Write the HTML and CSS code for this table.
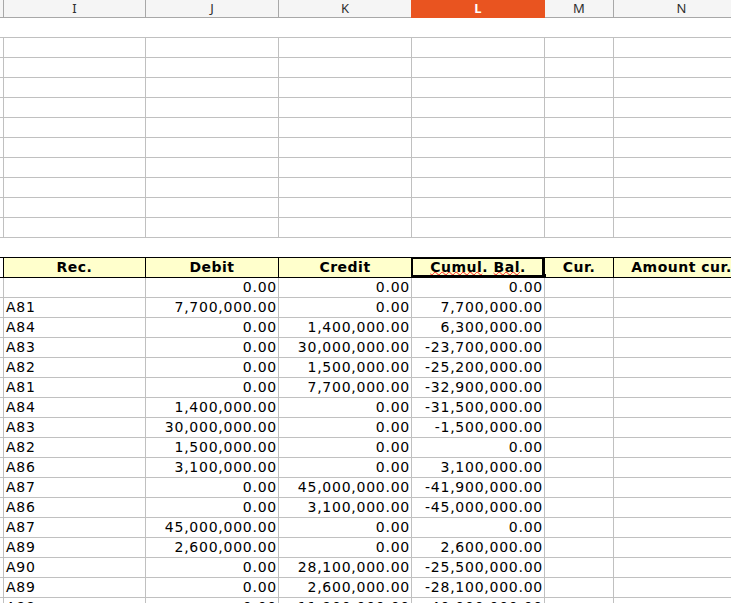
FILE: index.html
```html
<!DOCTYPE html>
<html>
<head>
<meta charset="utf-8">
<link rel="stylesheet" href="styles.css">
</head>
<body>
<div class="sheet">
  <div class="colhead">
    <div class="ch"></div>
    <div class="ch">I</div>
    <div class="ch">J</div>
    <div class="ch">K</div>
    <div class="ch sel">L</div>
    <div class="ch">M</div>
    <div class="ch">N</div>
  </div>
  <div class="blank lined"></div>
  <div class="row"><div></div><div></div><div></div><div></div><div></div><div></div><div></div></div>
  <div class="row"><div></div><div></div><div></div><div></div><div></div><div></div><div></div></div>
  <div class="row"><div></div><div></div><div></div><div></div><div></div><div></div><div></div></div>
  <div class="row"><div></div><div></div><div></div><div></div><div></div><div></div><div></div></div>
  <div class="row"><div></div><div></div><div></div><div></div><div></div><div></div><div></div></div>
  <div class="row"><div></div><div></div><div></div><div></div><div></div><div></div><div></div></div>
  <div class="row"><div></div><div></div><div></div><div></div><div></div><div></div><div></div></div>
  <div class="row"><div></div><div></div><div></div><div></div><div></div><div></div><div></div></div>
  <div class="row"><div></div><div></div><div></div><div></div><div></div><div></div><div></div></div>
  <div class="row"><div></div><div></div><div></div><div></div><div></div><div></div><div></div></div>
  <div class="blank"></div>
  <div class="thead">
    <div></div>
    <div>Rec.</div>
    <div>Debit</div>
    <div>Credit</div>
    <div class="cursor"><span class="sp">Cumul</span>. <span class="sp">Bal</span>.</div>
    <div>Cur.</div>
    <div>Amount cur.</div>
  </div>
  <div class="row data"><div></div><div></div><div class="n">0.00</div><div class="n">0.00</div><div class="n">0.00</div><div></div><div></div></div>
  <div class="row data"><div></div><div>A81</div><div class="n">7,700,000.00</div><div class="n">0.00</div><div class="n">7,700,000.00</div><div></div><div></div></div>
  <div class="row data"><div></div><div>A84</div><div class="n">0.00</div><div class="n">1,400,000.00</div><div class="n">6,300,000.00</div><div></div><div></div></div>
  <div class="row data"><div></div><div>A83</div><div class="n">0.00</div><div class="n">30,000,000.00</div><div class="n">-23,700,000.00</div><div></div><div></div></div>
  <div class="row data"><div></div><div>A82</div><div class="n">0.00</div><div class="n">1,500,000.00</div><div class="n">-25,200,000.00</div><div></div><div></div></div>
  <div class="row data"><div></div><div>A81</div><div class="n">0.00</div><div class="n">7,700,000.00</div><div class="n">-32,900,000.00</div><div></div><div></div></div>
  <div class="row data"><div></div><div>A84</div><div class="n">1,400,000.00</div><div class="n">0.00</div><div class="n">-31,500,000.00</div><div></div><div></div></div>
  <div class="row data"><div></div><div>A83</div><div class="n">30,000,000.00</div><div class="n">0.00</div><div class="n">-1,500,000.00</div><div></div><div></div></div>
  <div class="row data"><div></div><div>A82</div><div class="n">1,500,000.00</div><div class="n">0.00</div><div class="n">0.00</div><div></div><div></div></div>
  <div class="row data"><div></div><div>A86</div><div class="n">3,100,000.00</div><div class="n">0.00</div><div class="n">3,100,000.00</div><div></div><div></div></div>
  <div class="row data"><div></div><div>A87</div><div class="n">0.00</div><div class="n">45,000,000.00</div><div class="n">-41,900,000.00</div><div></div><div></div></div>
  <div class="row data"><div></div><div>A86</div><div class="n">0.00</div><div class="n">3,100,000.00</div><div class="n">-45,000,000.00</div><div></div><div></div></div>
  <div class="row data"><div></div><div>A87</div><div class="n">45,000,000.00</div><div class="n">0.00</div><div class="n">0.00</div><div></div><div></div></div>
  <div class="row data"><div></div><div>A89</div><div class="n">2,600,000.00</div><div class="n">0.00</div><div class="n">2,600,000.00</div><div></div><div></div></div>
  <div class="row data"><div></div><div>A90</div><div class="n">0.00</div><div class="n">28,100,000.00</div><div class="n">-25,500,000.00</div><div></div><div></div></div>
  <div class="row data"><div></div><div>A89</div><div class="n">0.00</div><div class="n">2,600,000.00</div><div class="n">-28,100,000.00</div><div></div><div></div></div>
  <div class="row data"><div></div><div>A88</div><div class="n">0.00</div><div class="n">11,900,000.00</div><div class="n">-40,000,000.00</div><div></div><div></div></div>
</div>
</body>
</html>
```

FILE: styles.css
```css
html, body {
  margin: 0;
  padding: 0;
  background: #ffffff;
  overflow: hidden;
}

.sheet {
  width: 750px;
  font-family: "DejaVu Sans", sans-serif;
  font-size: 14px;
  color: #000000;
}

.colhead,
.row,
.thead {
  display: grid;
  grid-template-columns: 4px 142px 133px 133px 133px 69px 136px;
}

.colhead .ch {
  height: 16px;
  line-height: 16px;
  padding-bottom: 1px;
  background: #f5f5f5;
  border-right: 1px solid #a8a8a8;
  border-bottom: 1px solid #a8a8a8;
  text-align: center;
  font-family: "Noto Sans", sans-serif;
  font-size: 13px;
  color: #2e2e2e;
}

.colhead .ch.sel {
  background: #e95420;
  border-right-color: #e95420;
  border-bottom-color: #e95420;
  box-shadow: -1px 0 0 #e95420;
  color: #ffffff;
  font-weight: bold;
}

.blank {
  height: 19px;
}

.blank.lined {
  border-bottom: 1px solid #c0c0c0;
}

.row > div {
  height: 19px;
  line-height: 19px;
  border-right: 1px solid #c0c0c0;
  border-bottom: 1px solid #c0c0c0;
  white-space: nowrap;
  overflow: hidden;
}

.row.data > div {
  padding: 0 2px;
  letter-spacing: 0.75px;
}

.row.data > div.n {
  text-align: right;
  padding-right: 1px;
}

.row.data > div:first-child {
  padding: 0;
}

.thead {
  border-top: 1px solid #000000;
  background: #ffffcc;
}

.thead > div {
  height: 19px;
  line-height: 19px;
  border-right: 1px solid #000000;
  border-bottom: 1px solid #000000;
  text-align: center;
  font-weight: bold;
  letter-spacing: 0.5px;
  white-space: nowrap;
}

.thead > div:first-child {
  background: #ffffff;
}

.thead > .cursor {
  position: relative;
  z-index: 2;
}

.thead > .cursor::before {
  content: "";
  position: absolute;
  top: -1px;
  left: -1px;
  right: 0;
  bottom: 0;
  border: 2px solid #000000;
}

.thead > .cursor::after {
  content: "";
  position: absolute;
  width: 4px;
  height: 4px;
  right: -2px;
  bottom: -1px;
  background: #000000;
}

.sp {
  text-decoration-line: underline;
  text-decoration-style: wavy;
  text-decoration-color: #ff2020;
  text-decoration-thickness: 1px;
  text-underline-offset: -1px;
  text-decoration-skip-ink: none;
}
```
